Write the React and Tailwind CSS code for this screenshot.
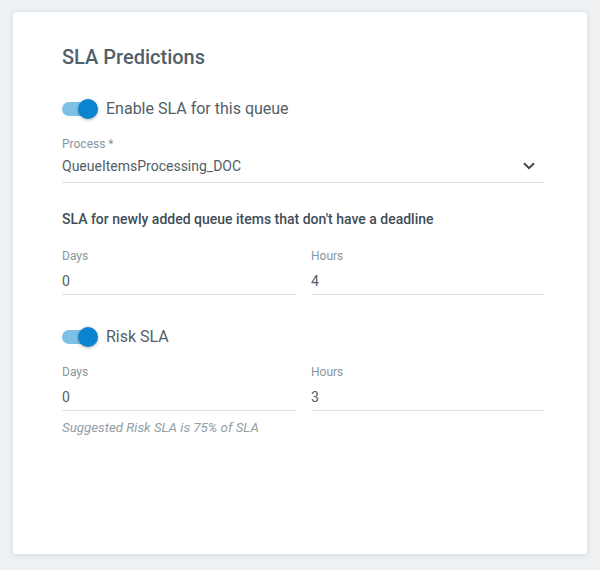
import React, { useState } from 'react';

const Toggle = ({ on, onClick }) => (
  <button onClick={onClick} className="relative w-[36px] h-[20px] shrink-0">
    <span className={`absolute left-0 top-[3px] w-[34px] h-[14px] rounded-full ${on ? 'bg-[#7ec1e6]' : 'bg-[#b8c1c7]'}`} />
    <span
      className={`absolute top-0 w-[20px] h-[20px] rounded-full shadow-[0_1px_3px_rgba(0,0,0,0.3)] ${on ? 'left-[16px] bg-[#0a84ce]' : 'left-0 bg-[#f5f5f5]'}`}
    />
  </button>
);

const Field = ({ label, value }) => (
  <div>
    <div className="text-[12px] leading-[16px] text-[#8a969e]">{label}</div>
    <div className="mt-[7px] pb-[3px] border-b border-[#dde1e4] text-[14px] leading-[20px] text-[#526069]">{value}</div>
  </div>
);

export default function App() {
  const [sla, setSla] = useState(true);
  const [risk, setRisk] = useState(true);

  return (
    <div className="min-h-[570px] bg-[#eef2f5] pt-[12px] px-[13px] pb-[16px] font-['Roboto',sans-serif]">
      <div className="h-[542px] bg-white rounded-[4px] shadow-[0_1px_6px_rgba(40,60,80,0.14)] pl-[49px] pr-[42px] pt-[33px]">
        <h1 className="text-[20px] leading-[24px] font-medium text-[#526069]">SLA Predictions</h1>

        <div className="mt-[28px] flex items-center gap-[8px] h-[24px]">
          <Toggle on={sla} onClick={() => setSla(!sla)} />
          <span className="text-[16px] leading-[24px] text-[#526069]">Enable SLA for this queue</span>
        </div>

        <div className="mt-[15px]">
          <div className="text-[12px] leading-[16px] text-[#8a969e]">Process *</div>
          <div className="mt-[4px] pb-[6px] border-b border-[#dde1e4] flex items-center justify-between">
            <span className="text-[14px] leading-[20px] text-[#526069]">QueueItemsProcessing_DOC</span>
            <svg width="12" height="8" viewBox="0 0 12 8" className="mr-[10px]">
              <path d="M1 1.2 L6 6.2 L11 1.2" fill="none" stroke="#3a4952" strokeWidth="2" />
            </svg>
          </div>
        </div>

        <div className="mt-[26px] text-[14px] leading-[20px] font-medium text-[#3f4d56]">
          SLA for newly added queue items that don't have a deadline
        </div>

        <div className="mt-[19px] grid grid-cols-2 gap-[15px]">
          <Field label="Days" value="0" />
          <Field label="Hours" value="4" />
        </div>

        <div className="mt-[30px] flex items-center gap-[8px] h-[24px]">
          <Toggle on={risk} onClick={() => setRisk(!risk)} />
          <span className="text-[16px] leading-[24px] text-[#526069]">Risk SLA</span>
        </div>

        <div className="mt-[15px] grid grid-cols-2 gap-[15px]">
          <Field label="Days" value="0" />
          <Field label="Hours" value="3" />
        </div>

        <div className="mt-[9px] text-[13.3px] leading-[16px] italic text-[#939ea6]">
          Suggested Risk SLA is 75% of SLA
        </div>
      </div>
    </div>
  );
}
